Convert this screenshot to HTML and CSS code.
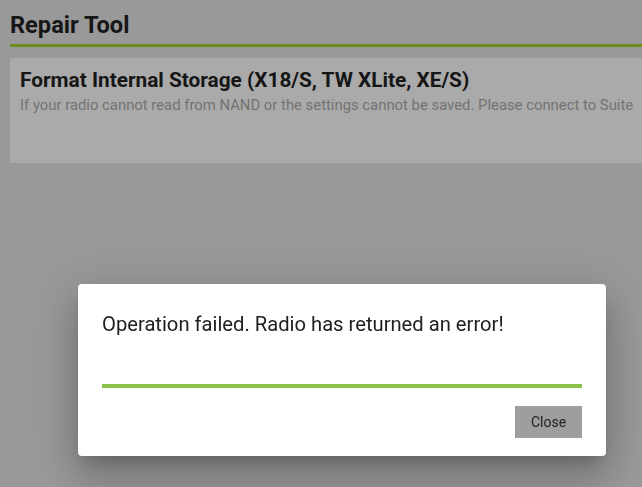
FILE: index.html
```html
<!DOCTYPE html>
<html>
<head>
<meta charset="utf-8">
<link rel="stylesheet" href="styles.css">
</head>
<body>
<main class="page">
  <h1 class="page-title">Repair Tool</h1>
  <section class="card">
    <h2 class="card-title">Format Internal Storage (X18/S, TW XLite, XE/S)</h2>
    <p class="card-desc">If your radio cannot read from NAND or the settings cannot be saved. Please connect to Suite</p>
  </section>
</main>
<div class="backdrop">
  <div class="dialog">
    <p class="dialog-text">Operation failed. Radio has returned an error!</p>
    <div class="progress"></div>
    <div class="dialog-actions">
      <button class="btn">Close</button>
    </div>
  </div>
</div>
</body>
</html>
```
FILE: styles.css
```css
html, body {
  margin: 0;
  padding: 0;
  height: 100%;
  overflow: hidden;
}
body {
  background: #999999;
  font-family: Roboto, "Liberation Sans", sans-serif;
}
.page {
  padding: 10px 0 0 10px;
}
.page-title {
  margin: 0;
  font-size: 23.6px;
  font-weight: 700;
  color: #161616;
  line-height: 30px;
  padding-bottom: 4px;
  border-bottom: 3px solid #6b8e1c;
}
.card {
  margin-top: 11px;
  background: #aaaaaa;
  height: 105px;
  padding: 9px 10px;
  box-sizing: border-box;
  white-space: nowrap;
  overflow: hidden;
}
.card-title {
  margin: 0;
  font-size: 20.8px;
  font-weight: 700;
  color: #161616;
  line-height: 26px;
}
.card-desc {
  margin: 1px 0 0;
  font-size: 14.85px;
  color: #737373;
  line-height: 22px;
}
.backdrop {
  position: fixed;
  inset: 0;
  display: flex;
  align-items: flex-start;
  justify-content: flex-start;
  padding: 284px 0 0 78px;
}
.dialog {
  width: 528px;
  box-sizing: border-box;
  background: #ffffff;
  border-radius: 4px;
  padding: 24px 24px 18px;
  box-shadow: 0 11px 15px -7px rgba(0,0,0,0.2), 0 24px 38px 3px rgba(0,0,0,0.14), 0 9px 46px 8px rgba(0,0,0,0.12);
}
.dialog-text {
  margin: 0;
  font-size: 20.2px;
  line-height: 32px;
  color: #212121;
}
.progress {
  margin-top: 44px;
  height: 4px;
  background: #8bc34a;
}
.dialog-actions {
  display: flex;
  justify-content: flex-end;
  margin-top: 18px;
}
.btn {
  font-family: Roboto, "Liberation Sans", sans-serif;
  font-size: 14px;
  color: #212121;
  background: #9e9e9e;
  border: none;
  border-radius: 0;
  width: 67px;
  height: 32px;
  padding: 0;
}
```
